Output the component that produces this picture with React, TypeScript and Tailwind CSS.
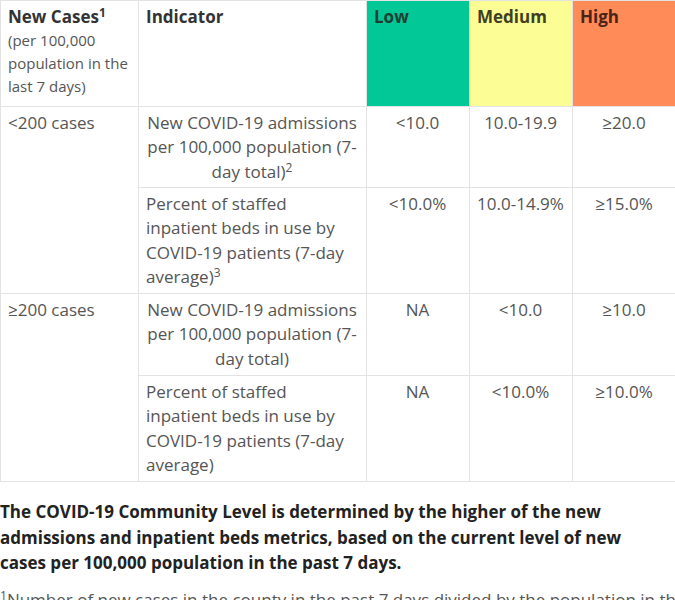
import React from "react";

const td = "border border-[#e3e3e3] pl-[7px] pr-[8px] pt-[4px] pb-[3px] align-top";
const sup = "text-[12px]";

export default function App() {
  return (
    <div className="w-[675px] h-[600px] overflow-hidden bg-white text-[#555] text-[17px] leading-[24.3px]" style={{ fontFamily: '"Open Sans", "Noto Sans", sans-serif' }}>
      <table className="table-fixed border-collapse w-[676px]">
        <colgroup>
          <col className="w-[138px]" />
          <col className="w-[228px]" />
          <col className="w-[103px]" />
          <col className="w-[103px]" />
          <col className="w-[104px]" />
        </colgroup>
        <thead>
          <tr className="h-[106px]">
            <th className={`${td} text-left font-normal`}>
              <div className="font-bold text-[#333] text-[17px] leading-[24px]">
                New Cases<sup className={sup}>1</sup>
              </div>
              <div className="text-[15px] leading-[23px] text-[#555]">(per 100,000 population in the last 7 days)</div>
            </th>
            <th className={`${td} text-left font-bold text-[#333]`}>Indicator</th>
            <th className={`${td} text-left font-bold bg-[#02c797] text-[#1d3f33]`}>Low</th>
            <th className={`${td} text-left font-bold bg-[#fdfd96] text-[#3f3f22]`}>Medium</th>
            <th className={`${td} text-left font-bold bg-[#ff8b59] text-[#4a2416]`}>High</th>
          </tr>
        </thead>
        <tbody>
          <tr className="h-[81px]">
            <td className={td} rowSpan={2}>&lt;200 cases</td>
            <td className={`${td} text-center`}>
              New COVID-19 admissions per 100,000 population (7-day total)<sup className={sup}>2</sup>
            </td>
            <td className={`${td} text-center`}>&lt;10.0</td>
            <td className={`${td} text-center`}>10.0-19.9</td>
            <td className={`${td} text-center`}>≥20.0</td>
          </tr>
          <tr className="h-[106px]">
            <td className={`${td} text-left`}>
              Percent of staffed inpatient beds in use by COVID-19 patients (7-day average)<sup className={sup}>3</sup>
            </td>
            <td className={`${td} text-center`}>&lt;10.0%</td>
            <td className={`${td} text-center`}>10.0-14.9%</td>
            <td className={`${td} text-center`}>≥15.0%</td>
          </tr>
          <tr className="h-[82px]">
            <td className={td} rowSpan={2}>≥200 cases</td>
            <td className={`${td} text-center`}>New COVID-19 admissions per 100,000 population (7-day total)</td>
            <td className={`${td} text-center`}>NA</td>
            <td className={`${td} text-center`}>&lt;10.0</td>
            <td className={`${td} text-center`}>≥10.0</td>
          </tr>
          <tr className="h-[106px]">
            <td className={`${td} text-left`}>
              Percent of staffed inpatient beds in use by COVID-19 patients (7-day average)
            </td>
            <td className={`${td} text-center`}>NA</td>
            <td className={`${td} text-center`}>&lt;10.0%</td>
            <td className={`${td} text-center`}>≥10.0%</td>
          </tr>
        </tbody>
      </table>
      <p className="mt-[17px] pr-[12px] font-bold text-[#222] text-[17px] leading-[25.5px]">
        The COVID-19 Community Level is determined by the higher of the new admissions and inpatient beds metrics, based on the current level of new cases per 100,000 population in the past 7 days.
      </p>
      <p className="mt-[11px] text-[#555] text-[17px] leading-[25.5px] whitespace-nowrap">
        <sup className={sup}>1</sup>Number of new cases in the county in the past 7 days divided by the population in the county multiplied by 100,000.
      </p>
    </div>
  );
}
